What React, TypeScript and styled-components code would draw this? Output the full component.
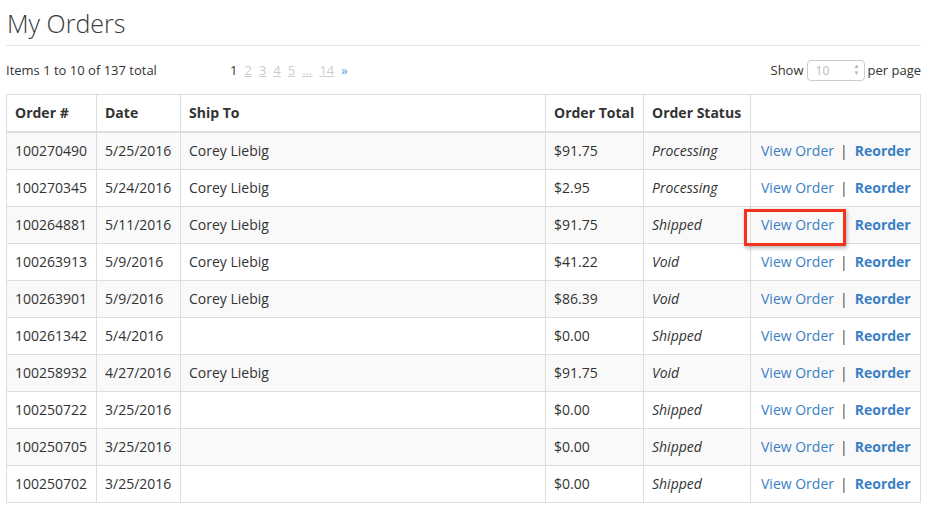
import React from 'react'
import styled, { createGlobalStyle } from 'styled-components'

const border = '#ddd'
const link = '#3a7fc4'

const GlobalStyle = createGlobalStyle`
  body {
    margin: 0;
    font-family: 'Open Sans', 'Liberation Sans', sans-serif;
    color: #333;
    background: #fff;
  }
`

const Page = styled.div`
  padding: 0 10px 0 6px;
`

const Title = styled.h1`
  margin: 0;
  padding: 6px 0 0 1px;
  font-size: 25px;
  font-weight: 300;
  line-height: 34px;
  color: #3a3a3a;
`

const Rule = styled.hr`
  margin: 5px 0 0;
  border: 0;
  border-top: 1px solid #e5e5e5;
`

const Toolbar = styled.div`
  display: flex;
  align-items: center;
  height: 48px;
  font-size: 13px;
`

const Summary = styled.div`
  width: 224px;
`

const Pager = styled.div`
  display: flex;
  gap: 7px;
  flex: 1;
`

const PageLink = styled.a<{ $current?: boolean; $next?: boolean }>`
  color: ${p => (p.$current ? '#333' : p.$next ? '#5b9be0' : '#cdcdcd')};
  text-decoration: ${p => (p.$current || p.$next ? 'none' : 'underline')};
`

const ShowBox = styled.div`
  display: flex;
  align-items: center;
  gap: 3px;
`

const Select = styled.div`
  position: relative;
  width: 48px;
  height: 19px;
  border: 1px solid #ccc;
  border-radius: 4px;
  color: #bbb;
  font-size: 12px;
  line-height: 19px;
  padding-left: 8px;
`

const Arrows = styled.span`
  position: absolute;
  right: 4px;
  top: 0;
  font-size: 6px;
  line-height: 7px;
  color: #b5b5b5;
  display: flex;
  flex-direction: column;
  justify-content: center;
  height: 100%;
`

const TableWrap = styled.div`
  position: relative;
`

const Table = styled.table`
  width: 100%;
  border-collapse: collapse;
  font-size: 14px;
  border: 1px solid ${border};
`

const Th = styled.th`
  text-align: left;
  font-weight: 700;
  padding: 8px;
  line-height: 20px;
  border: 1px solid ${border};
  border-bottom: 2px solid ${border};
`

const Tr = styled.tr`
  &:nth-child(odd) {
    background-color: #f9f9f9;
  }
`

const Td = styled.td<{ $italic?: boolean; $actions?: boolean }>`
  padding: 8px;
  padding-left: ${p => (p.$actions ? '10px' : '8px')};
  line-height: 20px;
  border: 1px solid ${border};
  font-style: ${p => (p.$italic ? 'italic' : 'normal')};
  white-space: nowrap;
`

const Link = styled.a<{ $bold?: boolean }>`
  color: ${link};
  text-decoration: none;
  font-weight: ${p => (p.$bold ? 700 : 400)};
`

const Sep = styled.span`
  margin: 0 7px 0 6px;
  color: #444;
`

const Highlight = styled.div`
  position: absolute;
  left: 738px;
  top: 115px;
  width: 96px;
  height: 31px;
  border: 3px solid #f5321e;
  box-shadow: 1px 2px 4px rgba(0, 0, 0, 0.3);
  pointer-events: none;
`

const orders = [
  ['100270490', '5/25/2016', 'Corey Liebig', '$91.75', 'Processing'],
  ['100270345', '5/24/2016', 'Corey Liebig', '$2.95', 'Processing'],
  ['100264881', '5/11/2016', 'Corey Liebig', '$91.75', 'Shipped'],
  ['100263913', '5/9/2016', 'Corey Liebig', '$41.22', 'Void'],
  ['100263901', '5/9/2016', 'Corey Liebig', '$86.39', 'Void'],
  ['100261342', '5/4/2016', '', '$0.00', 'Shipped'],
  ['100258932', '4/27/2016', 'Corey Liebig', '$91.75', 'Void'],
  ['100250722', '3/25/2016', '', '$0.00', 'Shipped'],
  ['100250705', '3/25/2016', '', '$0.00', 'Shipped'],
  ['100250702', '3/25/2016', '', '$0.00', 'Shipped'],
]

export default function App() {
  return (
    <Page>
      <GlobalStyle />
      <Title>My Orders</Title>
      <Rule />
      <Toolbar>
        <Summary>Items 1 to 10 of 137 total</Summary>
        <Pager>
          <PageLink $current>1</PageLink>
          <PageLink>2</PageLink>
          <PageLink>3</PageLink>
          <PageLink>4</PageLink>
          <PageLink>5</PageLink>
          <PageLink>...</PageLink>
          <PageLink>14</PageLink>
          <PageLink $next>»</PageLink>
        </Pager>
        <ShowBox>
          Show
          <Select>
            10
            <Arrows>
              <span>▲</span>
              <span>▼</span>
            </Arrows>
          </Select>
          per page
        </ShowBox>
      </Toolbar>
      <TableWrap>
        <Table>
          <thead>
            <tr>
              <Th style={{ width: 73 }}>Order #</Th>
              <Th style={{ width: 67 }}>Date</Th>
              <Th>Ship To</Th>
              <Th style={{ width: 81 }}>Order Total</Th>
              <Th style={{ width: 90 }}>Order Status</Th>
              <Th style={{ width: 153 }}></Th>
            </tr>
          </thead>
          <tbody>
            {orders.map(o => (
              <Tr key={o[0]}>
                <Td>{o[0]}</Td>
                <Td>{o[1]}</Td>
                <Td>{o[2]}</Td>
                <Td>{o[3]}</Td>
                <Td $italic>{o[4]}</Td>
                <Td $actions>
                  <Link>View Order</Link>
                  <Sep>|</Sep>
                  <Link $bold>Reorder</Link>
                </Td>
              </Tr>
            ))}
          </tbody>
        </Table>
        <Highlight />
      </TableWrap>
    </Page>
  )
}
